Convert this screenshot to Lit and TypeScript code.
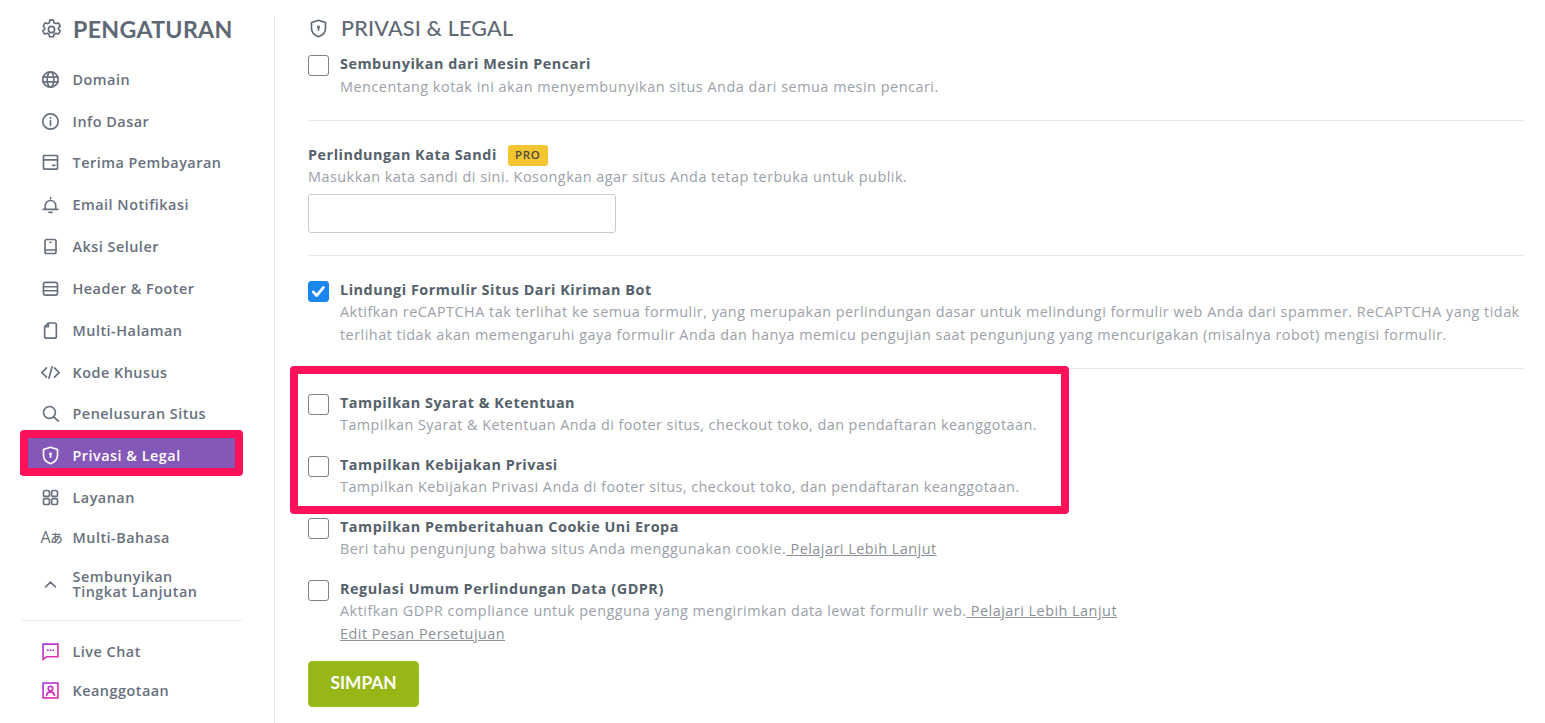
import { LitElement, html, css, svg } from "lit";
import { customElement } from "lit/decorators.js";

const shield = svg`<path d="M12 2.6l8 2.6v6.6c0 4.6-3.2 7.9-8 9.6-4.8-1.7-8-5-8-9.6V5.2z" stroke-linejoin="round"/><circle cx="12" cy="10.2" r="1.7" fill="currentColor" stroke="none"/><path d="M12 11v3"/>`;
const icons: Record<string, unknown> = {
  gear: svg`<circle cx="12" cy="12" r="3"/><path d="M10.2 3h3.6l.6 2.5 1.7.9 2.5-.8 1.8 3.1-1.9 1.8v1l1.9 1.8-1.8 3.1-2.5-.8-1.7.9-.6 2.5h-3.6l-.6-2.5-1.7-.9-2.5.8-1.8-3.1 1.9-1.8v-1L4 8.7l1.8-3.1 2.5.8 1.7-.9z" stroke-linejoin="round"/>`,
  globe: svg`<circle cx="12" cy="12" r="8.8"/><ellipse cx="12" cy="12" rx="3.8" ry="8.8"/><path d="M3.2 9.2h17.6M3.2 14.8h17.6"/>`,
  info: svg`<circle cx="12" cy="12" r="8.8"/><path d="M12 11v5.6"/><circle cx="12" cy="7.9" r="1.1" fill="currentColor" stroke="none"/>`,
  card: svg`<rect x="4" y="4" width="16" height="15.5" rx=".6"/><path d="M4 9h16M14.5 15.2h2.5"/>`,
  bell: svg`<path d="M3.5 17.6h17M6 17.6v-4.2a6 6 0 0 1 12 0v4.2M10.3 21h3.4M12 5.4V4"/>`,
  phone: svg`<rect x="5.7" y="4" width="12.6" height="16" rx="2"/><path d="M5.7 16h12.6M11.5 7.2h1"/>`,
  layout: svg`<rect x="4" y="5" width="16" height="14.5" rx="2.4"/><path d="M4 10h16M4 14.6h16"/>`,
  page: svg`<path d="M9.5 3.4h7.2a2 2 0 0 1 2 2v13.4a2 2 0 0 1-2 2H7.3a2 2 0 0 1-2-2V7.6zM9.5 3.4v4.2H5.3" stroke-linejoin="round"/>`,
  code: svg`<path d="M7.4 6.8L2.2 12l5.2 5.2M16.6 6.8l5.2 5.2-5.2 5.2M13.8 5.4l-3.6 13.2"/>`,
  search: svg`<circle cx="10.8" cy="10.8" r="6.8"/><path d="M15.8 15.8l5 5"/>`,
  shield,
  grid: svg`<rect x="4" y="4" width="6.8" height="6.8" rx="2"/><rect x="13.2" y="4" width="6.8" height="6.8" rx="2"/><rect x="4" y="13.2" width="6.8" height="6.8" rx="2"/><rect x="13.2" y="13.2" width="6.8" height="6.8" rx="2"/>`,
  chevron: svg`<path d="M6.4 14.6L12 9.4l5.6 5.2"/>`,
  chat: svg`<path d="M3.5 3.5h17v14.5H7.5l-4 3z" stroke="url(#mg)"/><g fill="#b83dd0" stroke="none"><rect x="8" y="9.5" width="1.9" height="1.9"/><rect x="11.1" y="9.5" width="1.9" height="1.9"/><rect x="14.2" y="9.5" width="1.9" height="1.9"/></g>`,
  member: svg`<rect x="3.5" y="3.5" width="17" height="17" stroke="url(#mg)"/><circle cx="12" cy="9.8" r="2.6" stroke="url(#mg)"/><path d="M7.5 17.4c.6-2.8 2.4-3.8 4.5-3.8s3.9 1 4.5 3.8" stroke="url(#mg)"/>`,
};

const icon = (name: string) => html`<svg class="ic" viewBox="0 0 24 24" fill="none" stroke="currentColor" stroke-width="1.9" stroke-linecap="round">
  <defs><linearGradient id="mg" gradientUnits="userSpaceOnUse" x1="4" y1="4" x2="20" y2="20"><stop offset="0" stop-color="#a53be0"/><stop offset="1" stop-color="#f02fa0"/></linearGradient></defs>
  ${icons[name]}</svg>`;

const nav: [string, string][] = [
  ["globe", "Domain"], ["info", "Info Dasar"], ["card", "Terima Pembayaran"], ["bell", "Email Notifikasi"],
  ["phone", "Aksi Seluler"], ["layout", "Header & Footer"], ["page", "Multi-Halaman"], ["code", "Kode Khusus"],
  ["search", "Penelusuran Situs"], ["shield", "Privasi & Legal"], ["grid", "Layanan"],
];

@customElement("app-root")
export class AppRoot extends LitElement {
  static styles = css`
    :host { display: block; height: 723px; overflow: hidden; background: #fff; position: relative; font-family: "Open Sans", sans-serif; }
    * { box-sizing: border-box; }
    .page { display: flex; height: 723px; }
    .side { width: 275px; flex: none; padding: 16px 32px 0 20px; }
    .side-inner { width: 222px; }
    .brand { display: flex; align-items: center; height: 26px; padding-left: 18.5px; gap: 9.5px; font-family: Lato, sans-serif; font-weight: 700; font-size: 23.2px; color: #5f6875; letter-spacing: .3px; margin-bottom: 16.3px; }
    .brand .ic { width: 25px; height: 25px; color: #5f6875; stroke-width: 1.5; }
    .item { display: flex; align-items: center; height: 41.85px; padding-left: 20px; gap: 11.5px; font-size: 14.4px; font-weight: 600; color: #68707e; letter-spacing: .5px; line-height: 15px; white-space: nowrap; }
    .item .ic { width: 21px; height: 21px; flex: none; }
    .item.active { color: #fff; background: linear-gradient(#8458b8, #8458b8) center / 100% 38px no-repeat; }
    .item.tight { height: 38px; }
    .item.tall { height: 55px; }
    .lang { width: 21px; flex: none; font-weight: 500; white-space: nowrap; letter-spacing: -.4px; margin-left: .5px; margin-right: -.5px; font-family: "Open Sans", "Noto Sans CJK JP", sans-serif; display: flex; align-items: baseline; }
    .lang .a { font-size: 16px; }
    .lang .j { font-size: 12.5px; }
    .side hr { border: 0; border-top: 1px solid #e8eaed; margin: 8px 2px 11px; width: 220px; }
    .item.low { height: 39.5px; }
    .rule { width: 1px; background: #e6e8eb; margin-top: 16px; flex: none; margin-left: -1px; }
    main { flex: 1; padding: 16px 20px 0 33px; min-width: 0; }
    h1 { margin: -1px 0 12px; display: flex; align-items: center; height: 26px; gap: 12px; font-family: Lato, sans-serif; font-size: 21.5px; font-weight: 500; color: #5f6875; letter-spacing: .2px; }
    h1 .ic { width: 21px; height: 21px; }
    .row { display: flex; gap: 11px; margin-bottom: 17px; }
    .box { width: 21px; height: 21px; flex: none; margin-top: 2px; border: 1.5px solid #7d8288; border-radius: 3px; background: #fff; }
    .box.on { background: #1a86f0; border-color: #1a86f0; display: flex; align-items: center; justify-content: center; }
    .box.on svg { width: 15px; height: 15px; }
    .t { font-size: 14.4px; font-weight: 700; color: #55616b; letter-spacing: .52px; line-height: 22.6px; white-space: nowrap; display: flex; align-items: center; }
    .d { font-size: 14.4px; color: #9ba1a9; letter-spacing: .495px; line-height: 22.4px; }
    .d.narrow { letter-spacing: .455px; }
    .d.wide { letter-spacing: .52px; }
    .d a { color: #8b9199; text-decoration: underline; }
    .line { border-top: 1px solid #e6e8eb; margin: 21.8px 0 23px; }
    .row.last { margin-bottom: 0; }
    .pro { margin-left: 11px; background: #f4c531; color: #4b4a3c; font-size: 11.5px; font-weight: 600; letter-spacing: .7px; width: 40px; height: 21px; border-radius: 3px; display: inline-flex; align-items: center; justify-content: center; }
    .input { width: 308px; height: 39px; margin-top: 5px; border: 1px solid #c9ccd3; border-radius: 3px; background: #fff; }
    .save { margin-top: 15.6px; width: 111px; height: 46px; background: #97b716; border: 1px solid #a4c22c; border-radius: 4px; color: #fff; font-family: Lato, sans-serif; font-weight: 700; font-size: 17.3px; display: flex; align-items: center; justify-content: center; padding: 0 0 3px; }
    .mark { position: absolute; border: 8px solid #ff1159; border-radius: 4px; pointer-events: none; }
    .mark.a { left: 20px; top: 430px; width: 223px; height: 46px; }
    .mark.b { left: 290px; top: 366px; width: 779px; height: 148px; }
  `;

  private cb(title: unknown, desc: unknown, opts: { on?: boolean; last?: boolean; fit?: string } = {}) {
    const { on = false, last = false, fit = "" } = opts;
    return html`<div class="row ${last ? "last" : ""}">
      <div class="box ${on ? "on" : ""}">${on ? html`<svg viewBox="0 0 16 16" fill="none" stroke="#fff" stroke-width="3" stroke-linecap="round" stroke-linejoin="round"><path d="M2.5 8.5l3.6 3.8 7.2-8.6"/></svg>` : ""}</div>
      <div><div class="t">${title}</div><div class="d ${fit}">${desc}</div></div>
    </div>`;
  }

  render() {
    return html`<div class="page">
      <aside class="side"><div class="side-inner">
        <div class="brand">${icon("gear")}PENGATURAN</div>
        ${nav.map(([i, label]) => html`<div class="item ${label === "Privasi & Legal" ? "active" : ""}">${icon(i)}${label}</div>`)}
        <div class="item tight"><span class="lang"><span class="a">A</span><span class="j">あ</span></span>Multi-Bahasa</div>
        <div class="item tall">${icon("chevron")}<span>Sembunyikan<br />Tingkat Lanjutan</span></div>
        <hr />
        <div class="item low">${icon("chat")}Live Chat</div>
        <div class="item low">${icon("member")}Keanggotaan</div>
      </div></aside>
      <div class="rule"></div>
      <main>
        <h1>${icon("shield")}PRIVASI &amp; LEGAL</h1>
        ${this.cb("Sembunyikan dari Mesin Pencari", "Mencentang kotak ini akan menyembunyikan situs Anda dari semua mesin pencari.", { last: true, fit: "wide" })}
        <div class="line"></div>
        <div class="t">Perlindungan Kata Sandi<span class="pro">PRO</span></div>
        <div class="d">Masukkan kata sandi di sini. Kosongkan agar situs Anda tetap terbuka untuk publik.</div>
        <div class="input"></div>
        <div class="line"></div>
        ${this.cb("Lindungi Formulir Situs Dari Kiriman Bot", "Aktifkan reCAPTCHA tak terlihat ke semua formulir, yang merupakan perlindungan dasar untuk melindungi formulir web Anda dari spammer. ReCAPTCHA yang tidak terlihat tidak akan memengaruhi gaya formulir Anda dan hanya memicu pengujian saat pengunjung yang mencurigakan (misalnya robot) mengisi formulir.", { on: true, last: true })}
        <div class="line"></div>
        ${this.cb("Tampilkan Syarat & Ketentuan", "Tampilkan Syarat & Ketentuan Anda di footer situs, checkout toko, dan pendaftaran keanggotaan.", { fit: "narrow" })}
        ${this.cb("Tampilkan Kebijakan Privasi", "Tampilkan Kebijakan Privasi Anda di footer situs, checkout toko, dan pendaftaran keanggotaan.", { fit: "narrow" })}
        ${this.cb("Tampilkan Pemberitahuan Cookie Uni Eropa", html`Beri tahu pengunjung bahwa situs Anda menggunakan cookie.<a> Pelajari Lebih Lanjut</a>`)}
        ${this.cb("Regulasi Umum Perlindungan Data (GDPR)", html`Aktifkan GDPR compliance untuk pengguna yang mengirimkan data lewat formulir web.<a> Pelajari Lebih Lanjut</a><br /><a>Edit Pesan Persetujuan</a>`, { last: true })}
        <div class="save">SIMPAN</div>
      </main>
    </div>
    <div class="mark a"></div>
    <div class="mark b"></div>`;
  }
}
